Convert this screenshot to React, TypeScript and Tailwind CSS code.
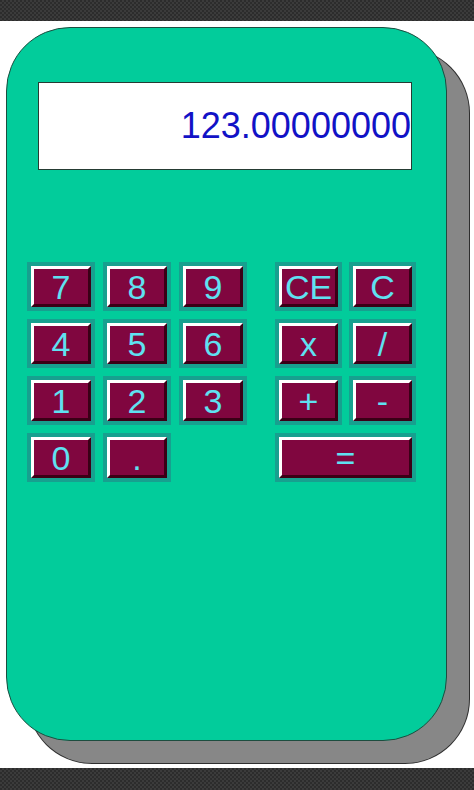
import React from "react";

const font = { fontFamily: '"Liberation Sans", Arial, sans-serif' };

function Key({ label, wide = false }: { label: string; wide?: boolean }) {
  return (
    <div className={`bg-[#17a08f] p-[4px] h-[49px] ${wide ? "col-span-2" : ""}`}>
      <div
        className="w-full h-full bg-[#80063f] border-t-[3px] border-l-[3px] border-t-white border-l-white border-b-[3px] border-r-[3px] border-b-[#3a0016] border-r-[#3a0016] flex items-center justify-center text-[34px] leading-none text-[#5fe1f1]"
        style={font}
      >
        {label}
      </div>
    </div>
  );
}

export default function App() {
  return (
    <div className="w-[474px] h-[790px] flex flex-col bg-white overflow-hidden">
      <div className="h-[21px] shrink-0 bg-[repeating-conic-gradient(#3b3b3b_0%_25%,#2c2c2c_0%_50%)] bg-[length:4px_4px]" />
      <div className="flex-1 bg-white pt-[6px] pl-[6px]">
        <div className="w-[441px] h-[714px] bg-[#02cc9b] border border-[#1d4d3f] rounded-[64px] shadow-[22px_22px_0_0_#878787,22px_22px_0_1px_#2e2e2e] pt-[54px]">
          <div className="ml-[31px] w-[374px] h-[88px] bg-white border border-[#253b33] flex items-center justify-end overflow-visible">
            <span className="text-[36px] leading-none text-[#1212c6] whitespace-nowrap" style={font}>
              123.00000000
            </span>
          </div>
          <div className="mt-[92px] ml-[20px] flex">
            <div className="grid grid-cols-[68px_68px_68px] gap-x-[8px] gap-y-[8px]">
              <Key label="7" />
              <Key label="8" />
              <Key label="9" />
              <Key label="4" />
              <Key label="5" />
              <Key label="6" />
              <Key label="1" />
              <Key label="2" />
              <Key label="3" />
              <Key label="0" />
              <Key label="." />
            </div>
            <div className="ml-[28px] grid grid-cols-[67px_67px] gap-x-[7px] gap-y-[8px] content-start">
              <Key label="CE" />
              <Key label="C" />
              <Key label="x" />
              <Key label="/" />
              <Key label="+" />
              <Key label="-" />
              <Key label="=" wide />
            </div>
          </div>
        </div>
      </div>
      <div className="h-[22px] shrink-0 bg-[repeating-conic-gradient(#3b3b3b_0%_25%,#2c2c2c_0%_50%)] bg-[length:4px_4px]" />
    </div>
  );
}
